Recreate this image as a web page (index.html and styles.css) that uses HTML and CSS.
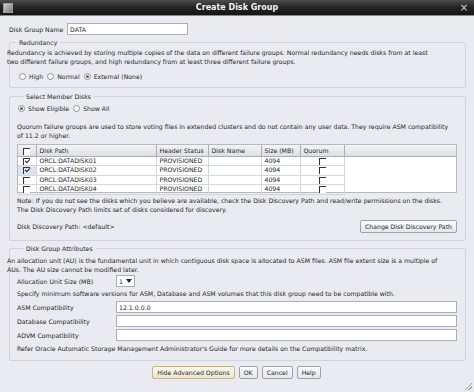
FILE: index.html
```html
<!DOCTYPE html>
<html lang="en">

<head>
    <meta charset="UTF-8">
    <title>Create Disk Group</title>
    <link rel="stylesheet" href="styles.css">
</head>

<body>
    <div class="dialog">
        <header class="titlebar">
            <span class="app-icon"></span>
            <span class="title">Create Disk Group</span>
            <span class="close">&#215;</span>
        </header>

        <main class="content">
            <div class="name-row">
                <span class="label">Disk Group Name</span>
                <span class="field name-field">DATA</span>
            </div>

            <fieldset class="group redundancy">
                <legend>Redundancy</legend>
                <p class="text outdent">Redundancy is achieved by storing multiple copies of the data on different failure groups. Normal redundancy needs disks from at least<br>two different failure groups, and high redundancy from at least three different failure groups.</p>
                <div class="radios">
                    <span class="radio"></span><span>High</span>
                    <span class="radio"></span><span>Normal</span>
                    <span class="radio on"></span><span>External (None)</span>
                </div>
            </fieldset>

            <fieldset class="group members">
                <legend>Select Member Disks</legend>
                <div class="radios tight">
                    <span class="radio on"></span><span>Show Eligible</span>
                    <span class="radio"></span><span>Show All</span>
                </div>
                <p class="text quorum-text">Quorum failure groups are used to store voting files in extended clusters and do not contain any user data. They require ASM compatibility<br>of 11.2 or higher.</p>

                <div class="table-pane">
                    <table class="disks">
                        <colgroup>
                            <col class="w-chk">
                            <col class="w-path">
                            <col class="w-status">
                            <col class="w-name">
                            <col class="w-size">
                            <col class="w-quorum">
                            <col>
                        </colgroup>
                        <thead>
                            <tr>
                                <th class="mid"><span class="chk"></span></th>
                                <th>Disk Path</th>
                                <th>Header Status</th>
                                <th>Disk Name</th>
                                <th>Size (MB)</th>
                                <th>Quorum</th>
                                <th class="rest"></th>
                            </tr>
                        </thead>
                        <tbody>
                            <tr>
                                <td class="mid"><span class="chk on"></span></td>
                                <td>ORCL:DATADISK01</td>
                                <td>PROVISIONED</td>
                                <td></td>
                                <td>4094</td>
                                <td class="mid"><span class="chk"></span></td>
                                <td class="rest"></td>
                            </tr>
                            <tr>
                                <td class="mid sel"><span class="chk on"></span></td>
                                <td>ORCL:DATADISK02</td>
                                <td>PROVISIONED</td>
                                <td></td>
                                <td>4094</td>
                                <td class="mid"><span class="chk"></span></td>
                                <td class="rest"></td>
                            </tr>
                            <tr>
                                <td class="mid"><span class="chk"></span></td>
                                <td>ORCL:DATADISK03</td>
                                <td>PROVISIONED</td>
                                <td></td>
                                <td>4094</td>
                                <td class="mid"><span class="chk"></span></td>
                                <td class="rest"></td>
                            </tr>
                            <tr>
                                <td class="mid"><span class="chk"></span></td>
                                <td>ORCL:DATADISK04</td>
                                <td>PROVISIONED</td>
                                <td></td>
                                <td>4094</td>
                                <td class="mid"><span class="chk"></span></td>
                                <td class="rest"></td>
                            </tr>
                        </tbody>
                    </table>
                </div>

                <p class="text note">Note: If you do not see the disks which you believe are available, check the Disk Discovery Path and read/write permissions on the disks.<br>The Disk Discovery Path limits set of disks considered for discovery.</p>
                <div class="discovery-row">
                    <span>Disk Discovery Path: &lt;default&gt;</span>
                    <button class="btn">Change Disk Discovery Path</button>
                </div>
            </fieldset>

            <fieldset class="group attributes">
                <legend>Disk Group Attributes</legend>
                <p class="text outdent">An allocation unit (AU) is the fundamental unit in which contiguous disk space is allocated to ASM files. ASM file extent size is a multiple of<br>AUs. The AU size cannot be modified later.</p>
                <div class="form-row au-row">
                    <span class="label">Allocation Unit Size (MB)</span>
                    <span class="combo"><span class="combo-value">1</span><span class="combo-arrow"></span></span>
                </div>
                <p class="text specify">Specify minimum software versions for ASM, Database and ASM volumes that this disk group need to be compatible with.</p>
                <div class="form-row first">
                    <span class="label">ASM Compatibility</span>
                    <span class="field wide">12.1.0.0.0</span>
                </div>
                <div class="form-row">
                    <span class="label">Database Compatibility</span>
                    <span class="field wide"></span>
                </div>
                <div class="form-row">
                    <span class="label">ADVM Compatibility</span>
                    <span class="field wide"></span>
                </div>
                <p class="text refer">Refer Oracle Automatic Storage Management Administrator's Guide for more details on the Compatibility matrix.</p>
            </fieldset>

            <div class="buttons">
                <button class="btn focus">Hide Advanced Options</button>
                <button class="btn">OK</button>
                <button class="btn">Cancel</button>
                <button class="btn">Help</button>
            </div>
        </main>
        <span class="grip"></span>
    </div>
</body>

</html>
```

FILE: styles.css
```css
* {
    box-sizing: border-box;
}

body {
    margin: 0;
    background: #e9ebf1;
    font-family: "DejaVu Sans", sans-serif;
    font-size: 6.2px;
    line-height: 9px;
    color: #262626;
}

.dialog {
    width: 474px;
    height: 392px;
    display: flex;
    flex-direction: column;
    position: relative;
    background: #e9ebf1;
}

/* title bar */
.titlebar {
    height: 16px;
    display: grid;
    grid-template-columns: 20px 1fr 20px;
    align-items: center;
    background: linear-gradient(#4d4d4d, #262626 45%, #141414);
    border-bottom: 1px solid #8a8a8a;
}

.app-icon {
    width: 10px;
    height: 10px;
    margin-left: 3px;
    background: linear-gradient(135deg, #cfcfcf, #7a7a7a);
    border: 1px solid #9a9a9a;
}

.title {
    text-align: center;
    color: #f2f2f2;
    font-weight: bold;
    font-size: 8px;
}

.close {
    color: #d8d8d8;
    font-size: 10px;
    text-align: center;
}

/* body */
.content {
    flex: 1;
    padding: 0 8px 0 7px;
    display: flex;
    flex-direction: column;
}

p.text {
    margin: 0;
    white-space: nowrap;
}

.name-row {
    display: flex;
    align-items: center;
    margin-top: 7px;
    height: 12px;
}

.name-row .label {
    margin-left: 2px;
    width: 58px;
}

.field {
    height: 12px;
    background: #fff;
    border: 1px solid #a9afba;
    padding: 1px 2px;
    line-height: 9px;
}

.name-field {
    width: 121px;
}

.group {
    margin: 3px 0 0 2px;
    padding: 0;
    border: 1px solid #d0d4dc;
    border-radius: 2px;
    min-width: 0;
}

.group legend {
    margin-left: 6px;
    padding: 0 3px;
    line-height: 9px;
}

.redundancy {
    padding: 1px 0 6px;
}

.redundancy .outdent {
    margin-left: -3px;
}

.radios {
    display: flex;
    align-items: center;
    height: 10px;
    margin: 5px 0 0 9px;
}

.radios span:not(.radio) {
    margin: 0 4px 0 3px;
}

.radio {
    width: 7px;
    height: 7px;
    border-radius: 50%;
    border: 1px solid #8c919a;
    background: #fff;
    display: inline-flex;
    align-items: center;
    justify-content: center;
}

.radio.on::after {
    content: "";
    width: 3px;
    height: 3px;
    border-radius: 50%;
    background: #5a6270;
}

.members {
    margin-top: 4px;
    padding: 0 8px 7px 7px;
}

.radios.tight {
    margin: 2px 0 0 1px;
}

.quorum-text {
    margin-top: 9px !important;
}

/* table */
.table-pane {
    margin-top: 4px;
    height: 49px;
    background: #fff;
    border: 1px solid #b4b9c2;
}

.disks {
    border-collapse: collapse;
    width: 100%;
    table-layout: fixed;
}

.w-chk {
    width: 18px;
}

.w-path {
    width: 120px;
}

.w-status {
    width: 52px;
}

.w-name {
    width: 53px;
}

.w-size {
    width: 39px;
}

.w-quorum {
    width: 44px;
}

.disks th {
    height: 11px;
    font-weight: normal;
    text-align: left;
    background: linear-gradient(#f2f3f5, #dcdfe4);
    border-right: 1px solid #a8adb6;
    border-bottom: 1px solid #a8adb6;
    padding: 0 3px;
    white-space: nowrap;
    overflow: hidden;
}

.disks td {
    height: 9.5px;
    padding: 0 3px;
    border-right: 1px solid #d3d6dc;
    border-bottom: 1px solid #d3d6dc;
    line-height: 8px;
}

.disks th.mid {
    text-align: center;
}

.disks td.mid {
    text-align: center;
}

.disks .rest {
    border-right: none;
}

.disks td.rest {
    border-bottom: none;
}

.sel {
    background: #d9e3f2;
}

.chk {
    display: inline-block;
    width: 7px;
    height: 7px;
    vertical-align: middle;
    border-top: 1px solid #333;
    border-left: 1px solid #333;
    background: #fff;
    position: relative;
}

.sel .chk {
    background: transparent;
}

.chk.on::after {
    content: "";
    position: absolute;
    left: 1px;
    top: 0;
    width: 4px;
    height: 2px;
    border-left: 1.5px solid #222;
    border-bottom: 1.5px solid #222;
    transform: rotate(-45deg);
}

.note {
    margin-top: 3px !important;
}

.discovery-row {
    display: flex;
    justify-content: space-between;
    align-items: center;
    margin-top: 6px;
}

/* buttons */
.btn {
    font-family: "DejaVu Sans", sans-serif;
    font-size: 6.2px;
    color: #262626;
    height: 13px;
    padding: 0 4px;
    border: 1px solid #9da3ad;
    border-radius: 2px;
    background: linear-gradient(#fbfbfc, #e3e6eb);
}

.btn.focus {
    border-color: #c9b77a;
    background: linear-gradient(#fbf8ec, #ece6cf);
}

.attributes {
    margin-top: 3px;
    padding: 0 8px 7px 7px;
}

.attributes .outdent {
    margin-left: -10px;
    margin-top: 3px;
}

.form-row {
    display: flex;
    align-items: center;
    margin-top: 2px;
}

.form-row .label {
    width: 99px;
}

.au-row {
    margin-top: 1px;
}

.form-row.first {
    margin-top: 3px;
}

.combo {
    width: 19px;
    height: 12px;
    display: flex;
    align-items: center;
    background: #fff;
    border: 1px solid #a9afba;
}

.combo-value {
    flex: 1;
    padding-left: 2px;
}

.combo-arrow {
    width: 0;
    height: 0;
    margin-right: 2px;
    border-left: 3px solid transparent;
    border-right: 3px solid transparent;
    border-top: 4px solid #222;
}

.specify {
    margin-top: 2px !important;
}

.wide {
    flex: 1;
}

.refer {
    margin-top: 3px !important;
}

.buttons {
    display: flex;
    justify-content: center;
    gap: 4px;
    margin-top: 5px;
}

.grip {
    position: absolute;
    right: 2px;
    bottom: 2px;
    width: 7px;
    height: 7px;
    background: linear-gradient(135deg, transparent 45%, #9ca1aa 45%, #9ca1aa 55%, transparent 55%, transparent 70%, #9ca1aa 70%, #9ca1aa 80%, transparent 80%);
}
```
